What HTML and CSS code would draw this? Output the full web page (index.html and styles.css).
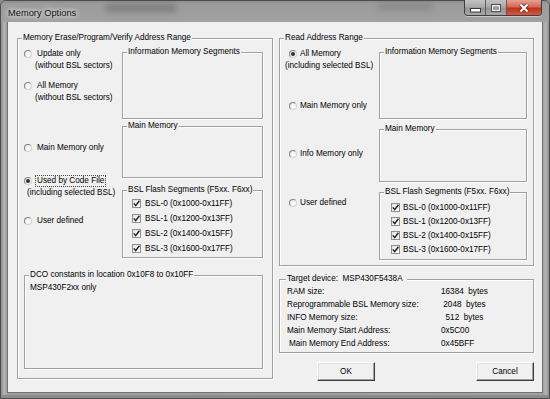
FILE: index.html
```html
<!DOCTYPE html>
<html>
<head>
<meta charset="utf-8">
<title>Memory Options</title>
<link rel="stylesheet" href="styles.css">
</head>
<body>
<div class="window">
  <div class="titlebar">
    <span class="blur b1"></span>
    <span class="blur b2"></span>
    <span class="title">Memory Options</span>
    <div class="caption">
      <span class="cbtn min"><svg width="11" height="5" viewBox="0 0 11 5"><rect x="0.5" y="0.5" width="10" height="3.5" fill="#fff" stroke="#3a3a3a"/></svg></span>
      <span class="cbtn max"><svg width="10" height="8" viewBox="0 0 10 8"><rect x="0.5" y="0.5" width="9" height="7" fill="none" stroke="#4a4a4a"/><rect x="1.5" y="1.5" width="7" height="5" fill="none" stroke="#f4f4f4"/></svg></span>
      <span class="cbtn close"><svg width="12" height="10" viewBox="0 0 12 10"><path d="M2.5 1.5 L9.5 8.5 M9.5 1.5 L2.5 8.5" stroke="#5a2a20" stroke-width="3.6"/><path d="M2.5 1.5 L9.5 8.5 M9.5 1.5 L2.5 8.5" stroke="#ffffff" stroke-width="2"/></svg></span>
    </div>
  </div>
  <div class="client">
    <div class="colL">
      <div class="group gErase">
        <span class="legend">Memory Erase/Program/Verify Address Range</span>
        <div class="split">
          <div class="radios rL">
            <div class="opt"><span class="radio"></span>Update only</div>
            <div class="sub sw">(without BSL sectors)</div>
            <div class="opt mt8"><span class="radio"></span>All Memory</div>
            <div class="sub sw">(without BSL sectors)</div>
            <div class="opt mt38"><span class="radio"></span>Main Memory only</div>
            <div class="opt mt21"><span class="radio on"></span><span class="focus">Used by Code File</span></div>
            <div class="sub si">(including selected BSL)</div>
            <div class="opt mt16"><span class="radio"></span>User defined</div>
          </div>
          <div class="boxes bL">
            <div class="group infoL"><span class="legend">Information Memory Segments</span></div>
            <div class="group mainL"><span class="legend">Main Memory</span></div>
            <div class="group bslL"><span class="legend">BSL Flash Segments (F5xx. F6xx)</span>
              <div class="chkrow"><span class="chk"><svg width="7" height="7" viewBox="0 0 7 7"><path d="M0.8 3.4 L2.7 5.6 L6.4 0.8" fill="none" stroke="#1c1c1c" stroke-width="1.4"/></svg></span>BSL-0 (0x1000-0x11FF)</div>
              <div class="chkrow"><span class="chk"><svg width="7" height="7" viewBox="0 0 7 7"><path d="M0.8 3.4 L2.7 5.6 L6.4 0.8" fill="none" stroke="#1c1c1c" stroke-width="1.4"/></svg></span>BSL-1 (0x1200-0x13FF)</div>
              <div class="chkrow"><span class="chk"><svg width="7" height="7" viewBox="0 0 7 7"><path d="M0.8 3.4 L2.7 5.6 L6.4 0.8" fill="none" stroke="#1c1c1c" stroke-width="1.4"/></svg></span>BSL-2 (0x1400-0x15FF)</div>
              <div class="chkrow"><span class="chk"><svg width="7" height="7" viewBox="0 0 7 7"><path d="M0.8 3.4 L2.7 5.6 L6.4 0.8" fill="none" stroke="#1c1c1c" stroke-width="1.4"/></svg></span>BSL-3 (0x1600-0x17FF)</div>
            </div>
          </div>
        </div>
        <div class="group dco">
          <span class="legend">DCO constants in location 0x10F8 to 0x10FF</span>
          <div class="dcotext">MSP430F2xx only</div>
        </div>
      </div>
    </div>
    <div class="colR">
      <div class="group gRead">
        <span class="legend">Read Address Range</span>
        <div class="split">
          <div class="radios rR">
            <div class="opt"><span class="radio on"></span>All Memory</div>
            <div class="sub">(including selected BSL)</div>
            <div class="opt mt28"><span class="radio"></span>Main Memory only</div>
            <div class="opt mt36"><span class="radio"></span>Info Memory only</div>
            <div class="opt mt37"><span class="radio"></span>User defined</div>
          </div>
          <div class="boxes bR">
            <div class="group infoR"><span class="legend">Information Memory Segments</span></div>
            <div class="group mainR"><span class="legend">Main Memory</span></div>
            <div class="group bslR"><span class="legend">BSL Flash Segments (F5xx. F6xx)</span>
              <div class="chkrow"><span class="chk"><svg width="7" height="7" viewBox="0 0 7 7"><path d="M0.8 3.4 L2.7 5.6 L6.4 0.8" fill="none" stroke="#1c1c1c" stroke-width="1.4"/></svg></span>BSL-0 (0x1000-0x11FF)</div>
              <div class="chkrow"><span class="chk"><svg width="7" height="7" viewBox="0 0 7 7"><path d="M0.8 3.4 L2.7 5.6 L6.4 0.8" fill="none" stroke="#1c1c1c" stroke-width="1.4"/></svg></span>BSL-1 (0x1200-0x13FF)</div>
              <div class="chkrow"><span class="chk"><svg width="7" height="7" viewBox="0 0 7 7"><path d="M0.8 3.4 L2.7 5.6 L6.4 0.8" fill="none" stroke="#1c1c1c" stroke-width="1.4"/></svg></span>BSL-2 (0x1400-0x15FF)</div>
              <div class="chkrow"><span class="chk"><svg width="7" height="7" viewBox="0 0 7 7"><path d="M0.8 3.4 L2.7 5.6 L6.4 0.8" fill="none" stroke="#1c1c1c" stroke-width="1.4"/></svg></span>BSL-3 (0x1600-0x17FF)</div>
            </div>
          </div>
        </div>
      </div>
      <div class="group target">
        <span class="legend tlg">Target device:  MSP430F5438A</span>
        <div class="trow"><span class="tk">RAM size:</span><span class="tv">16384  bytes</span></div>
        <div class="trow"><span class="tk">Reprogrammable BSL Memory size:</span><span class="tv"> 2048  bytes</span></div>
        <div class="trow"><span class="tk">INFO Memory size:</span><span class="tv">  512  bytes</span></div>
        <div class="trow"><span class="tk">Main Memory Start Address:</span><span class="tv">0x5C00</span></div>
        <div class="trow"><span class="tk ind">Main Memory End Address:</span><span class="tv">0x45BFF</span></div>
      </div>
      <div class="btnrow">
        <span class="btn">OK</span>
        <span class="btn">Cancel</span>
      </div>
    </div>
  </div>
</div>
</body>
</html>
```
FILE: styles.css
```css
* { box-sizing: border-box; }
html, body { margin: 0; padding: 0; }
body {
  width: 550px;
  height: 399px;
  overflow: hidden;
  background: #8e8e8e;
  font-family: "Liberation Sans", Arial, sans-serif;
  font-size: 8.2px;
  color: #000;
}
.window {
  position: relative;
  width: 550px;
  height: 399px;
  border: 1px solid #4d4d4d;
  border-radius: 6px 6px 0 0;
  background: linear-gradient(90deg, #8a8a8a 0, #b6b6b6 3px, #9f9f9f 6px, #a2a2a2 calc(100% - 6px), #b6b6b6 calc(100% - 3px), #8a8a8a 100%);
  box-shadow: inset 0 -3px 0 #8c8c8c;
}
.titlebar {
  position: relative;
  height: 21px;
  background: linear-gradient(#8f8f8f 0, #9c9c9c 3px, #a1a1a1 100%);
  border-radius: 5px 5px 0 0;
}
.blur {
  position: absolute;
  background: rgba(70, 70, 70, 0.35);
  filter: blur(3px);
  border-radius: 4px;
}
.b1 { left: 104px; top: 3px; width: 72px; height: 8px; }
.b2 { left: 376px; top: 2px; width: 56px; height: 7px; background: rgba(70,70,70,0.22); }
.title {
  position: absolute;
  left: 7px;
  top: 7px;
  font-size: 9.3px;
  line-height: 11px;
  color: #111;
  text-shadow: 0 0 6px #fff, 0 0 4px #e8e8e8;
}
.caption {
  position: absolute;
  right: 7px;
  top: -1px;
  height: 16px;
  display: flex;
  border: 1px solid #3e3e3e;
  border-top: none;
  border-radius: 0 0 4px 4px;
  overflow: hidden;
  box-shadow: 0 1px 0 rgba(255,255,255,0.4);
}
.cbtn {
  height: 15px;
  display: flex;
  align-items: center;
  justify-content: center;
}
.min, .max {
  width: 21px;
  background: linear-gradient(#c4c4c4, #a9a9a9 45%, #959595 55%, #a7a7a7);
  border-right: 1px solid #5c5c5c;
}
.min svg { margin-top: 5px; }
.close {
  width: 34px;
  background: linear-gradient(#e8a090, #d26a55 45%, #c0321c 55%, #d25a40);
}
.client {
  margin-left: 7px;
  width: 534px;
  height: 370px;
  background: #f0f0f0;
  box-shadow: 0 0 0 1px #727272;
  display: flex;
  gap: 6px;
  padding: 16px 8px 0 9px;
}
.colL { width: 256px; }
.colR { width: 255px; display: flex; flex-direction: column; }
.group {
  position: relative;
  border: 1px solid #a0a0a0;
  box-shadow: inset 1px 1px 0 #fff, 1px 1px 0 #fff;
}
.legend {
  position: absolute;
  top: -6px;
  left: 4px;
  line-height: 10px;
  padding: 0 1px;
  background: #f0f0f0;
  white-space: pre;
}
.gErase { padding: 9px 9px 9px 6px; }
.split { display: flex; }
.rL { width: 98px; }
.bL { width: 141px; }
.boxes { margin-top: 4px; display: flex; flex-direction: column; }
.infoL { height: 67px; }
.mainL { height: 52px; margin-top: 7px; }
.bslL { height: 68px; margin-top: 12px; padding: 5px 0 0 9px; }
.dco { margin-top: 17px; height: 94px; padding: 6px 0 0 5px; }
.dcotext { line-height: 12px; }

.opt { display: flex; align-items: center; height: 12px; line-height: 12px; white-space: nowrap; }
.sub { line-height: 12px; white-space: nowrap; }
.sw { margin-left: 11px; }
.si { margin-left: 3px; }
.mt8 { margin-top: 8px; }
.mt16 { margin-top: 16px; }
.mt21 { margin-top: 21px; }
.mt28 { margin-top: 28px; }
.mt36 { margin-top: 36px; }
.mt37 { margin-top: 37px; }
.mt38 { margin-top: 38px; }

.radio {
  position: relative;
  flex: none;
  width: 8px;
  height: 8px;
  border-radius: 50%;
  border: 1px solid;
  border-color: #858585 #d2d2d2 #d2d2d2 #858585;
  background: radial-gradient(circle at 60% 60%, #ffffff, #e6e6e6);
  margin-right: 5px;
}
.radio.on::after {
  content: "";
  position: absolute;
  left: 1px;
  top: 1px;
  width: 4px;
  height: 4px;
  border-radius: 50%;
  background: #2b2f35;
}
.rR .radio { margin-left: 4px; margin-right: 3px; }
.focus {
  display: inline-block;
  line-height: 10px;
  height: 12px;
  padding: 0 1px;
  border: 1px dotted #444;
  margin-left: -2px;
}

.gRead { padding: 9px 6px 5px 5px; }
.rR { width: 94px; }
.bR { width: 148px; }
.infoR { height: 67px; }
.mainR { height: 53px; margin-top: 10px; }
.bslR { height: 68px; margin-top: 10px; padding: 7px 0 0 11px; }
.bslR .chkrow { height: 14px; }
.bslR .chk { margin-right: 3px; }

.chkrow { display: flex; align-items: center; height: 15px; white-space: nowrap; }
.chk {
  flex: none;
  width: 9px;
  height: 9px;
  border: 1px solid #8f8f8f;
  background: linear-gradient(135deg, #e4e4e4, #ffffff);
  margin-right: 4px;
  display: flex;
  align-items: center;
  justify-content: center;
}

.target { margin-top: 13px; height: 74px; padding: 5px 0 0 7px; }
.tlg { left: 6px; padding: 0 4px 0 1px; }
.trow { display: flex; line-height: 13px; white-space: pre; }
.tk { width: 154px; flex: none; }
.tk.ind { margin-left: 2px; width: 152px; }

.btnrow {
  display: flex;
  justify-content: space-between;
  padding-left: 38px;
  margin-top: 9px;
}
.btn {
  width: 58px;
  height: 19px;
  display: flex;
  align-items: center;
  justify-content: center;
  background: #f0f0f0;
  border: 1px solid;
  border-color: #ffffff #3f3f3f #3f3f3f #ffffff;
  box-shadow: inset -1px -1px 0 #a0a0a0, inset 1px 1px 0 #e3e3e3;
}
```
